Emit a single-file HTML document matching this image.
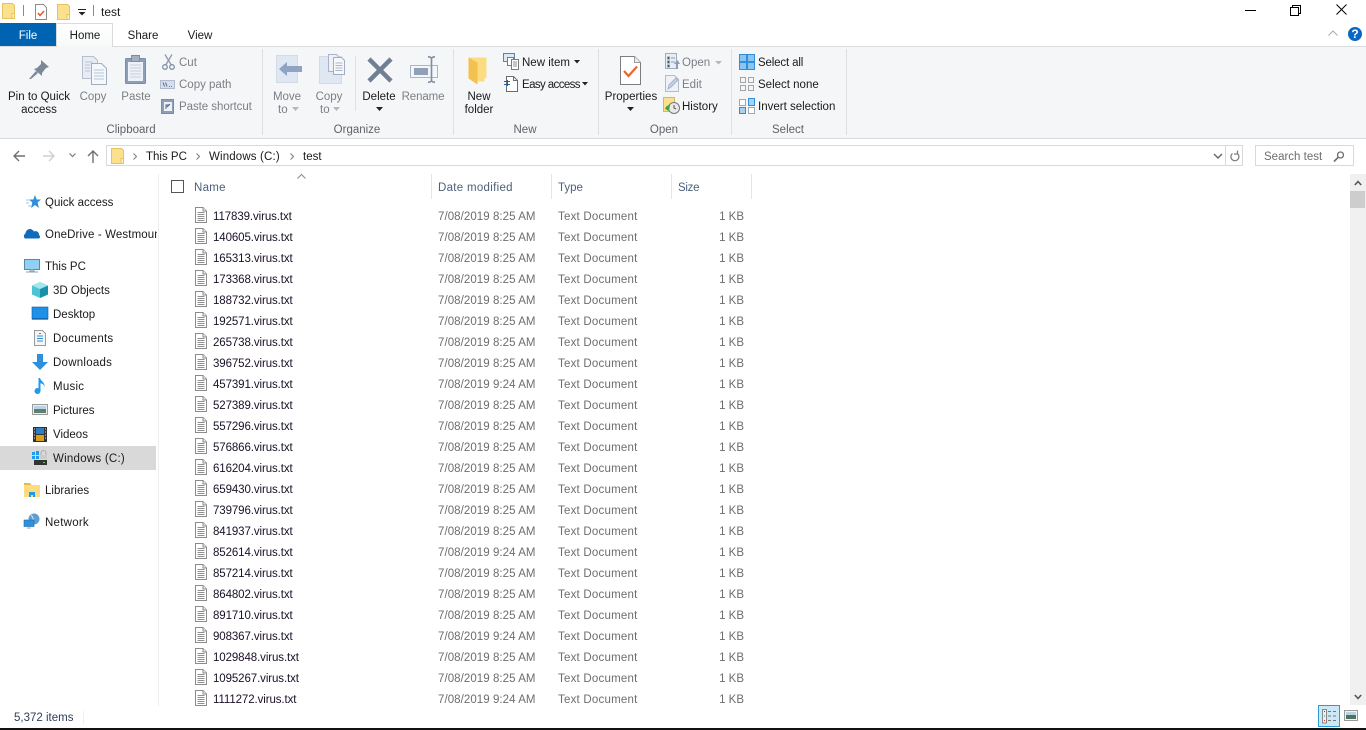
<!DOCTYPE html>
<html><head><meta charset="utf-8"><title>test</title>
<style>
html,body{margin:0;padding:0;background:#fff;width:1366px;height:730px;overflow:hidden}
body{position:relative;font-family:"Liberation Sans",sans-serif;font-size:11.5px;color:#1a1a1a}
.t{position:absolute;line-height:16px;white-space:nowrap;margin-top:1px}
.c{transform:translateX(-50%);text-align:center}
.d{color:#7b7f85}
.g{color:#5f6266}
.nv{letter-spacing:.25px}
.b{position:absolute}
svg{position:absolute;overflow:visible}
.r{position:absolute;left:0;height:21px;width:760px}
.r span{position:absolute;top:4px;line-height:16px;white-space:nowrap}
.r .n{left:213px;color:#1a1026;letter-spacing:-.1px}
.r .m{left:438px;color:#6d6d6d;letter-spacing:.06px}
.r .y{left:558px;color:#6d6d6d;letter-spacing:.22px}
.r .s{right:16px;color:#6d6d6d}
.r svg{left:195px;top:2px}
#list{position:absolute;left:0;top:205px;width:760px;height:501px;overflow:hidden}
</style></head><body>
<svg width="0" height="0" style="position:absolute"><defs>
<symbol id="doc" viewBox="0 0 12 16"><path d="M.5.5h7.500l3.500 3.500v11.500H.5z" fill="#fff" stroke="#8b8b8b"/><path d="M8 .5v3.500h3.500" fill="#eee" stroke="#8b8b8b"/><path d="M2.500 5.500h7M2.500 7.500h7M2.500 9.500h7M2.500 11.500h7M2.500 13.500h7" stroke="#8f8f8f"/></symbol>
<symbol id="fold" viewBox="0 0 13 16"><path d="M.5.5h10l2 2v13H.5z" fill="#fbe08e" stroke="#e8c35c"/><path d="M10 10.500h2.500v5H10z" fill="#fff3c4" stroke="#e8c35c"/></symbol>
</defs></svg>

<!-- title bar -->
<svg style="left:2px;top:3px" width="13" height="16"><use href="#fold" width="13" height="16"/></svg>
<div class="b" style="left:23px;top:5px;width:1px;height:11px;background:#8a8a8a"></div>
<svg style="left:35px;top:4px" width="12" height="16"><path d="M.5.500h8l3 3v12H.5z" fill="#fff" stroke="#8c8c8c"/><path d="M3 9l2 2.500 4-4.500" fill="none" stroke="#e8572a" stroke-width="1.500"/></svg>
<svg style="left:57px;top:4px" width="13" height="16"><use href="#fold" width="13" height="16"/></svg>
<svg style="left:77px;top:9px" width="10" height="8"><path d="M1 .5h8" stroke="#222"/><path d="M1.500 3h7l-3.500 3.500z" fill="#222"/></svg>
<div class="b" style="left:93px;top:5px;width:1px;height:11px;background:#8a8a8a"></div>
<div class="t" style="left:101px;top:3px;font-size:12px">test</div>
<svg style="left:1245px;top:10px" width="11" height="1"><path d="M0 .5h11" stroke="#000"/></svg>
<svg style="left:1290px;top:5px" width="11" height="11"><path d="M.5 2.500h8v8h-8zM2.500 2.500v-2h8v8h-2" fill="none" stroke="#000"/></svg>
<svg style="left:1336px;top:4px" width="11" height="11"><path d="M.5.5l10 10M10.500.5l-10 10" stroke="#000"/></svg>

<!-- tabs -->
<div class="b" style="left:0;top:23px;width:56px;height:23px;background:#0063b1"></div>
<div class="t c" style="left:28px;top:27px;color:#fff">File</div>
<div class="b" style="left:56px;top:23px;width:57px;height:24px;border:1px solid #dadbdc;border-bottom:none;box-sizing:border-box;background:linear-gradient(#fff,#f8f9fa)"></div>
<div class="t c" style="left:85px;top:27px">Home</div>
<div class="t c" style="left:143px;top:27px">Share</div>
<div class="t c" style="left:200px;top:27px">View</div>
<svg style="left:1328px;top:30px" width="10" height="6"><path d="M.5 5.500l4.500-4.500 4.500 4.500" fill="none" stroke="#a8a8a8"/></svg>
<div class="b" style="left:1348px;top:27px;width:14px;height:14px;border-radius:50%;background:#0a68c4"></div>
<div class="t c" style="left:1355px;top:25px;color:#fff;font-weight:bold;font-size:12px">?</div>

<!-- ribbon -->
<div class="b" style="left:0;top:46px;width:1366px;height:1px;background:#dadbdc"></div>
<div class="b" style="left:0;top:47px;width:1366px;height:91px;background:#f5f6f7"></div>
<div class="b" style="left:57px;top:46px;width:55px;height:2px;background:#f5f6f7"></div>
<div class="b" style="left:0;top:138px;width:1366px;height:1px;background:#dadbdc"></div>
<div class="b" style="left:262px;top:49px;width:1px;height:86px;background:#dfe0e1"></div>
<div class="b" style="left:453px;top:49px;width:1px;height:86px;background:#dfe0e1"></div>
<div class="b" style="left:598px;top:49px;width:1px;height:86px;background:#dfe0e1"></div>
<div class="b" style="left:731px;top:49px;width:1px;height:86px;background:#dfe0e1"></div>
<div class="b" style="left:846px;top:49px;width:1px;height:86px;background:#dfe0e1"></div>
<div class="b" style="left:355px;top:56px;width:1px;height:55px;background:#dfe0e1"></div>

<!-- pin -->
<svg style="left:28px;top:59px" width="22" height="22"><path d="M13 1l8 7-3 1-4 5 0 3-8-7 3-1 4-4z" fill="#7c8797"/><path d="M8 12l-7 8 2 0 7-6z" fill="#7c8797"/></svg>
<div class="t c" style="left:39px;top:88px">Pin to Quick</div>
<div class="t c" style="left:39px;top:101px">access</div>
<!-- copy -->
<svg style="left:82px;top:56px" width="25" height="29"><path d="M.5.500h11l4 4v18H.5z" fill="#e8edf4" stroke="#b4bfcf"/><path d="M9.500 7.500h10l5 5v16h-15z" fill="#f4f7fb" stroke="#a0aec0"/><path d="M3 6h8M3 9h5M3 12h5M3 15h5M12 14h10M12 17h10M12 20h10M12 23h10" stroke="#b8c4d4"/></svg>
<div class="t c d" style="left:93px;top:88px">Copy</div>
<!-- paste -->
<svg style="left:125px;top:55px" width="22" height="30"><rect x=".5" y="3.500" width="20" height="25" rx="1" fill="#8d9fb8" stroke="#7b8ca5"/><rect x="3" y="7" width="15" height="19" fill="#eef2f8"/><rect x="6.500" y=".5" width="8" height="6" fill="#a3b0c2" stroke="#7b8ca5"/><path d="M5 10h11M5 13h11M5 16h11M5 19h11M5 22h11" stroke="#c3cfdf"/></svg>
<div class="t c d" style="left:136px;top:88px">Paste</div>
<!-- small clipboard -->
<svg style="left:162px;top:54px" width="13" height="16"><path d="M3 .5l6 10M10 .5l-6 10" stroke="#8e9aac" stroke-width="1.300"/><circle cx="3" cy="13" r="2.300" fill="none" stroke="#7f90a8" stroke-width="1.300"/><circle cx="10" cy="13" r="2.300" fill="none" stroke="#7f90a8" stroke-width="1.300"/></svg>
<div class="t d" style="left:179px;top:54px">Cut</div>
<svg style="left:160px;top:80px" width="15" height="9"><rect x=".5" y=".5" width="14" height="8" fill="#d5deea" stroke="#b0bccd"/><path d="M3 2.500l1.500 4M5.500 2.500l1.500 4M9 6.500h.8M11 6.500h.8" stroke="#5d6d85"/></svg>
<div class="t d" style="left:179px;top:76px">Copy path</div>
<svg style="left:161px;top:98px" width="13" height="16"><rect x=".5" y="1.500" width="12" height="14" fill="#8d9fb8" stroke="#7b8ca5"/><rect x="3" y="4" width="8" height="9" fill="#eef2f8"/><path d="M5 11V7h3M6 9l3-3" stroke="#4a5c78" fill="none"/></svg>
<div class="t d" style="left:179px;top:98px;letter-spacing:-.05px">Paste shortcut</div>
<div class="t c g" style="left:131px;top:121px">Clipboard</div>

<!-- move -->
<svg style="left:276px;top:55px" width="28" height="30"><path d="M.5.500h21v27H.5z" fill="#dee7f2" stroke="#d2dbe7"/><path d="M11 21l-8-7 8-7v4h15v6H11z" fill="#8ea4c2"/></svg>
<div class="t c d" style="left:287px;top:88px">Move</div>
<div class="t d" style="left:278px;top:101px">to</div>
<svg style="left:292px;top:107px" width="7" height="4"><path d="M0 0h7l-3.500 4z" fill="#b4b8bd"/></svg>
<!-- copy to -->
<svg style="left:319px;top:54px" width="27" height="31"><path d="M.5 2.500h22v27H.5z" fill="#dee7f2" stroke="#d2dbe7"/><path d="M9.500.5h8l3 3v14h-11z" fill="#eef2f8" stroke="#a8b5c7"/><path d="M14.500 3.500h8l3 3v14h-11z" fill="#f6f8fb" stroke="#a0aec0"/><path d="M16.500 9h7M16.500 11.500h7M16.500 14h7M16.500 16.500h7" stroke="#a9b6c8"/></svg>
<div class="t c d" style="left:329px;top:88px">Copy</div>
<div class="t d" style="left:320px;top:101px">to</div>
<svg style="left:333px;top:107px" width="7" height="4"><path d="M0 0h7l-3.500 4z" fill="#b4b8bd"/></svg>
<!-- delete -->
<svg style="left:367px;top:57px" width="26" height="26"><path d="M2 2l22 22M24 2L2 24" stroke="#6f7f96" stroke-width="4.500"/></svg>
<div class="t c" style="left:379px;top:88px">Delete</div>
<svg style="left:376px;top:107px" width="7" height="4"><path d="M0 0h7l-3.500 4z" fill="#222"/></svg>
<!-- rename -->
<svg style="left:410px;top:56px" width="29" height="28"><rect x=".5" y="9.500" width="27" height="12" fill="#f3f6fa" stroke="#a9b6c7"/><rect x="4" y="12" width="14" height="7" fill="#8fa0b8"/><path d="M18 .8c2 0 3 .5 3.500 1.500.5-1 1.500-1.500 3.500-1.500M18 26.200c2 0 3-.5 3.500-1.500.5 1 1.500 1.500 3.500 1.500M21.500 2v23" fill="none" stroke="#7e8ea6" stroke-width="1.600"/></svg>
<div class="t c d" style="left:423px;top:88px;letter-spacing:-.1px">Rename</div>
<div class="t c g" style="left:357px;top:121px">Organize</div>

<!-- new -->
<svg style="left:468px;top:57px" width="20" height="28"><path d="M.5.500h18v20l-2 1v3H9z" fill="#fcdc80"/><path d="M.5 .5l9 5v22l-9-6z" fill="#f2c14f"/></svg>
<div class="t c" style="left:479px;top:88px">New</div>
<div class="t c" style="left:479px;top:101px">folder</div>
<svg style="left:503px;top:53px" width="16" height="17"><rect x=".5" y=".5" width="11" height="8" fill="#dbe8f5" stroke="#6d7f96"/><rect x="4.500" y="4.500" width="6" height="8" fill="#fff" stroke="#7b7b7b"/><rect x="8.500" y="6.500" width="7" height="10" fill="#fff" stroke="#7b7b7b"/><path d="M10 9h4M10 11h4M10 13h4" stroke="#8b8b8b"/></svg>
<div class="t" style="left:522px;top:54px">New item</div>
<svg style="left:574px;top:60px" width="6" height="4"><path d="M0 0h6L3 3.500z" fill="#222"/></svg>
<svg style="left:503px;top:75px" width="15" height="17"><path d="M3.500 1.500h7l4 4v11h-11z" fill="#fff" stroke="#6c6c6c"/><path d="M10.500 1.500v4h4" fill="none" stroke="#6c6c6c"/><path d="M1 6.500h6M1 9.500h6M4.500 5v6" stroke="#1f5fa8"/></svg>
<div class="t" style="left:522px;top:76px;letter-spacing:-.6px">Easy access</div>
<svg style="left:582px;top:82px" width="6" height="4"><path d="M0 0h6L3 3.500z" fill="#222"/></svg>
<div class="t c g" style="left:525px;top:121px">New</div>

<!-- open -->
<svg style="left:620px;top:56px" width="21" height="29"><path d="M.5.500h14l6 6v22H.5z" fill="#fff" stroke="#7d7d7d"/><path d="M14.500.5v6h6" fill="#eee" stroke="#9b9b9b"/><path d="M4 15l4.500 5L17 10.500" fill="none" stroke="#e8662a" stroke-width="2.200"/></svg>
<div class="t c" style="left:631px;top:88px">Properties</div>
<svg style="left:627px;top:107px" width="7" height="4"><path d="M0 0h7l-3.500 4z" fill="#222"/></svg>
<svg style="left:665px;top:53px" width="15" height="17"><rect x=".5" y=".5" width="11" height="15" fill="#e7edf5" stroke="#9fadc0"/><path d="M2.500 4h2v2h-2zM2.500 8h2v2h-2zM2.500 12h2v2h-2zM6 5h4M6 9h4" stroke="#8b9bb1"/><path d="M11 16v-5H9l3.500-4 2.500 4h-2v5z" fill="#8b9bb1"/></svg>
<div class="t d" style="left:682px;top:54px">Open</div>
<svg style="left:715px;top:61px" width="7" height="4"><path d="M0 0h7l-3.500 3.500z" fill="#b4b8bd"/></svg>
<svg style="left:665px;top:75px" width="15" height="17"><path d="M.5.500h9l4 4v12H.5z" fill="#eef2f8" stroke="#b0bccd"/><path d="M3 14l1-4 7-7 2 2-7 7z" fill="#c3d1e4" stroke="#a6b5c9"/></svg>
<div class="t d" style="left:682px;top:76px">Edit</div>
<svg style="left:663px;top:97px" width="17" height="17"><rect x=".5" y=".5" width="11" height="14" fill="#fbe08e" stroke="#d9b659"/><circle cx="11" cy="11" r="5.500" fill="#e9e9e9" stroke="#777"/><path d="M11 8v3l2 1" fill="none" stroke="#555"/><path d="M2 12a5 5 0 0 1 5-4l-1 6z" fill="#43a43d"/></svg>
<div class="t" style="left:682px;top:98px">History</div>
<div class="t c g" style="left:664px;top:121px">Open</div>

<!-- select -->
<svg style="left:739px;top:54px" width="16" height="16"><rect width="16" height="16" fill="#2f8fdc"/><rect x="1" y="1" width="6" height="6" fill="#8cc4f0"/><rect x="9" y="1" width="6" height="6" fill="#8cc4f0"/><rect x="1" y="9" width="6" height="6" fill="#8cc4f0"/><rect x="9" y="9" width="6" height="6" fill="#8cc4f0"/></svg>
<div class="t" style="left:758px;top:54px;letter-spacing:-.15px">Select all</div>
<svg style="left:740px;top:77px" width="14" height="14"><path d="M.5.500h5v5h-5zM8.500.5h5v5h-5zM.5 8.500h5v5h-5zM8.500 8.500h5v5h-5z" fill="none" stroke="#a5a5a5"/></svg>
<div class="t" style="left:758px;top:76px">Select none</div>
<svg style="left:739px;top:98px" width="16" height="16"><path d="M.5 1.500h6v6h-6zM9.500 9.500h6v6h-6z" fill="#fff" stroke="#a5a5a5"/><path d="M9.500.5h6v7h-6zM.5 9.500h6v6h-6z" fill="#a8d2f2" stroke="#2f8fdc"/></svg>
<div class="t" style="left:758px;top:98px">Invert selection</div>
<div class="t c g" style="left:788px;top:121px">Select</div>

<!-- address bar -->
<svg style="left:13px;top:150px" width="12" height="12"><path d="M.8 6H12M6 1L1 6l5 5" fill="none" stroke="#6f6f6f" stroke-width="1.400"/></svg>
<svg style="left:43px;top:150px" width="12" height="12"><path d="M11.200 6H0M6 1l5 5-5 5" fill="none" stroke="#cfcfcf" stroke-width="1.400"/></svg>
<svg style="left:69px;top:153px" width="7" height="5"><path d="M.5.500l3 3 3-3" fill="none" stroke="#7a7a7a" stroke-width="1.200"/></svg>
<svg style="left:87px;top:150px" width="12" height="13"><path d="M6 13V1M1 6l5-5 5 5" fill="none" stroke="#6f6f6f" stroke-width="1.400"/></svg>
<div class="b" style="left:106px;top:145px;width:1137px;height:21px;border:1px solid #d9d9d9;box-sizing:border-box"></div>
<svg style="left:111px;top:148px" width="13" height="16"><use href="#fold" width="13" height="16"/></svg>
<svg style="left:133px;top:153px" width="4" height="7"><path d="M.5.500l3 3-3 3" fill="none" stroke="#7a7a7a"/></svg>
<div class="t" style="left:146px;top:148px">This PC</div>
<svg style="left:196px;top:153px" width="4" height="7"><path d="M.5.500l3 3-3 3" fill="none" stroke="#7a7a7a"/></svg>
<div class="t" style="left:209px;top:148px;letter-spacing:.15px">Windows (C:)</div>
<svg style="left:290px;top:153px" width="4" height="7"><path d="M.5.500l3 3-3 3" fill="none" stroke="#7a7a7a"/></svg>
<div class="t" style="left:303px;top:148px">test</div>
<svg style="left:1213px;top:153px" width="10" height="6"><path d="M1 1l4 4 4-4" fill="none" stroke="#6a6a6a" stroke-width="1.500"/></svg>
<div class="b" style="left:1225px;top:146px;width:1px;height:19px;background:#d9d9d9"></div>
<svg style="left:1230px;top:150px" width="10" height="12"><path d="M2.500 3.500a4 4 0 1 0 5 .2M7.500 .5v3.500h-3.500" fill="none" stroke="#7f7f7f" stroke-width="1.300"/></svg>
<div class="b" style="left:1255px;top:145px;width:99px;height:21px;border:1px solid #d9d9d9;box-sizing:border-box"></div>
<div class="t" style="left:1264px;top:148px;color:#6d6d6d">Search test</div>
<svg style="left:1333px;top:151px" width="12" height="11"><circle cx="7.500" cy="4" r="3" fill="none" stroke="#6f6f6f" stroke-width="1.300"/><path d="M5 6.500L1 10.500" stroke="#6f6f6f" stroke-width="1.600"/></svg>

<!-- nav pane -->
<div class="b" style="left:158px;top:174px;width:1px;height:532px;background:#eeeeee"></div>
<svg style="left:26px;top:195px" width="15" height="14"><path d="M9 0l1.700 4.500H15l-3.400 3 1.300 5.500L9 10l-4 3 1.300-5.500L3 4.500h4.300z" fill="#2f8fdc"/><path d="M0 5h4M0 8h3M2 11h3" stroke="#9ec9ee"/></svg>
<div class="t" style="left:45px;top:194px">Quick access</div>
<svg style="left:24px;top:228px" width="16" height="11"><path d="M1 10.500a3 3 0 0 1 .5-5 4.500 4.500 0 0 1 8.500-2 3.500 3.500 0 0 1 5 3.500 2 2 0 0 1 0 3.500z" fill="#0f6cbd"/></svg>
<div class="t" style="left:45px;top:226px;width:112px;overflow:hidden;letter-spacing:.12px">OneDrive - Westmount</div>
<svg style="left:24px;top:259px" width="16" height="14"><rect x=".5" y=".5" width="15" height="10" fill="#8fd0f5" stroke="#5d87a8"/><path d="M6 11h4v1.500H6zM2 13h12" stroke="#8ea2b3" fill="none"/></svg>
<div class="t" style="left:45px;top:258px">This PC</div>
<svg style="left:32px;top:282px" width="16" height="16"><path d="M8 0l8 3.500v9L8 16 0 12.500v-9z" fill="#4cc4d4"/><path d="M8 7l8-3.500v9L8 16z" fill="#1b8fa8"/><path d="M8 7L0 3.500 8 0l8 3.500z" fill="#a2e6ec"/></svg>
<div class="t" style="left:53px;top:282px">3D Objects</div>
<svg style="left:32px;top:307px" width="16" height="13"><rect width="16" height="12" fill="#1e90e6" stroke="#0e5fa8" stroke-width=".6"/><path d="M0 12h16" stroke="#0a4f8f" stroke-width="1.200"/></svg>
<div class="t" style="left:53px;top:306px">Desktop</div>
<svg style="left:34px;top:330px" width="12" height="16"><path d="M.5.500h8l3 3v12H.5z" fill="#f4f4f4" stroke="#9a9a9a"/><path d="M3 6h6M3 8.500h6M3 11h6M5 3.500h2" stroke="#2f8fdc"/></svg>
<div class="t nv" style="left:53px;top:330px">Documents</div>
<svg style="left:32px;top:354px" width="16" height="16"><path d="M5 0h6v8h5l-8 8-8-8h5z" fill="#2f8fdc"/></svg>
<div class="t nv" style="left:53px;top:354px">Downloads</div>
<svg style="left:34px;top:378px" width="12" height="16"><path d="M4.500 0h1.500c.5 3 5 4 4.500 9-.5-2-2-3.500-4-3.700V13a3 3 0 1 1-2-2.800z" fill="#1f9bed"/></svg>
<div class="t nv" style="left:53px;top:378px">Music</div>
<svg style="left:32px;top:404px" width="16" height="11"><rect x=".5" y=".5" width="15" height="10" fill="#e8f0f5" stroke="#9a9a9a"/><path d="M2 2h12v3H2z" fill="#b7d3e6"/><path d="M2 5h12v4H2z" fill="#5b8070"/></svg>
<div class="t" style="left:53px;top:402px">Pictures</div>
<svg style="left:33px;top:427px" width="14" height="15"><rect width="14" height="15" fill="#333"/><rect x="3" y="1" width="8" height="6" fill="#2a7fc4"/><rect x="3" y="8" width="8" height="6" fill="#d8a020"/><path d="M1 2h1M1 5h1M1 8h1M1 11h1M12 2h1M12 5h1M12 8h1M12 11h1" stroke="#ddd"/></svg>
<div class="t" style="left:53px;top:426px">Videos</div>
<div class="b" style="left:0;top:446px;width:156px;height:24px;background:#d9d9d9"></div>
<svg style="left:32px;top:450px" width="16" height="16"><path d="M0 2h3v3H0zM4 1h3v4H4zM0 6h3v3H0zM4 6h3v3H4z" fill="#1f9bed"/><path d="M9 5V3a2.500 2.500 0 0 1 5 0v2" fill="none" stroke="#aaa"/><rect x="8" y="5" width="7" height="4" fill="#ccc"/><rect x="2" y="10" width="13" height="5" fill="#333"/><rect x="11" y="12" width="2" height="1" fill="#6c6"/></svg>
<div class="t nv" style="left:53px;top:450px">Windows (C:)</div>
<svg style="left:24px;top:483px" width="16" height="14"><path d="M0 0h6l2 2h8v12H0z" fill="#fcdc80"/><path d="M0 0h6l1 2H0z" fill="#e8b84c"/><path d="M5 14V9h6v5h-2v-2H7v2z" fill="#1f9bed"/></svg>
<div class="t" style="left:45px;top:482px">Libraries</div>
<svg style="left:24px;top:514px" width="16" height="15"><circle cx="10" cy="5" r="5.500" fill="#5d9fd0"/><path d="M7 1c2 2 3 5 2 9" stroke="#cfe3f2" fill="none"/><rect x="0" y="6" width="10" height="6.500" fill="#2f8fdc" stroke="#1a6aa8" stroke-width=".6"/><path d="M3 14h4" stroke="#8ea2b3"/></svg>
<div class="t nv" style="left:45px;top:514px">Network</div>

<!-- header -->
<div class="b" style="left:171px;top:180px;width:13px;height:13px;border:1px solid #555;box-sizing:border-box"></div>
<div class="t" style="left:194px;top:179px;color:#4c607a;letter-spacing:.3px">Name</div>
<svg style="left:297px;top:174px" width="9" height="5"><path d="M.5 4.500l4-4 4 4" fill="none" stroke="#8a8a8a"/></svg>
<div class="b" style="left:431px;top:174px;width:1px;height:25px;background:#e5e5e5"></div>
<div class="t" style="left:438px;top:179px;color:#4c607a;letter-spacing:.3px">Date modified</div>
<div class="b" style="left:551px;top:174px;width:1px;height:25px;background:#e5e5e5"></div>
<div class="t" style="left:558px;top:179px;color:#4c607a">Type</div>
<div class="b" style="left:671px;top:174px;width:1px;height:25px;background:#e5e5e5"></div>
<div class="t" style="left:678px;top:179px;color:#4c607a;letter-spacing:-.3px">Size</div>
<div class="b" style="left:751px;top:174px;width:1px;height:25px;background:#e5e5e5"></div>

<!-- rows -->
<div id="list">
<div class="r" style="top:0"><svg width="12" height="16"><use href="#doc" width="12" height="16"/></svg><span class="n">117839.virus.txt</span><span class="m">7/08/2019 8:25 AM</span><span class="y">Text Document</span><span class="s">1 KB</span></div>
<div class="r" style="top:21px"><svg width="12" height="16"><use href="#doc" width="12" height="16"/></svg><span class="n">140605.virus.txt</span><span class="m">7/08/2019 8:25 AM</span><span class="y">Text Document</span><span class="s">1 KB</span></div>
<div class="r" style="top:42px"><svg width="12" height="16"><use href="#doc" width="12" height="16"/></svg><span class="n">165313.virus.txt</span><span class="m">7/08/2019 8:25 AM</span><span class="y">Text Document</span><span class="s">1 KB</span></div>
<div class="r" style="top:63px"><svg width="12" height="16"><use href="#doc" width="12" height="16"/></svg><span class="n">173368.virus.txt</span><span class="m">7/08/2019 8:25 AM</span><span class="y">Text Document</span><span class="s">1 KB</span></div>
<div class="r" style="top:84px"><svg width="12" height="16"><use href="#doc" width="12" height="16"/></svg><span class="n">188732.virus.txt</span><span class="m">7/08/2019 8:25 AM</span><span class="y">Text Document</span><span class="s">1 KB</span></div>
<div class="r" style="top:105px"><svg width="12" height="16"><use href="#doc" width="12" height="16"/></svg><span class="n">192571.virus.txt</span><span class="m">7/08/2019 8:25 AM</span><span class="y">Text Document</span><span class="s">1 KB</span></div>
<div class="r" style="top:126px"><svg width="12" height="16"><use href="#doc" width="12" height="16"/></svg><span class="n">265738.virus.txt</span><span class="m">7/08/2019 8:25 AM</span><span class="y">Text Document</span><span class="s">1 KB</span></div>
<div class="r" style="top:147px"><svg width="12" height="16"><use href="#doc" width="12" height="16"/></svg><span class="n">396752.virus.txt</span><span class="m">7/08/2019 8:25 AM</span><span class="y">Text Document</span><span class="s">1 KB</span></div>
<div class="r" style="top:168px"><svg width="12" height="16"><use href="#doc" width="12" height="16"/></svg><span class="n">457391.virus.txt</span><span class="m">7/08/2019 9:24 AM</span><span class="y">Text Document</span><span class="s">1 KB</span></div>
<div class="r" style="top:189px"><svg width="12" height="16"><use href="#doc" width="12" height="16"/></svg><span class="n">527389.virus.txt</span><span class="m">7/08/2019 8:25 AM</span><span class="y">Text Document</span><span class="s">1 KB</span></div>
<div class="r" style="top:210px"><svg width="12" height="16"><use href="#doc" width="12" height="16"/></svg><span class="n">557296.virus.txt</span><span class="m">7/08/2019 8:25 AM</span><span class="y">Text Document</span><span class="s">1 KB</span></div>
<div class="r" style="top:231px"><svg width="12" height="16"><use href="#doc" width="12" height="16"/></svg><span class="n">576866.virus.txt</span><span class="m">7/08/2019 8:25 AM</span><span class="y">Text Document</span><span class="s">1 KB</span></div>
<div class="r" style="top:252px"><svg width="12" height="16"><use href="#doc" width="12" height="16"/></svg><span class="n">616204.virus.txt</span><span class="m">7/08/2019 8:25 AM</span><span class="y">Text Document</span><span class="s">1 KB</span></div>
<div class="r" style="top:273px"><svg width="12" height="16"><use href="#doc" width="12" height="16"/></svg><span class="n">659430.virus.txt</span><span class="m">7/08/2019 8:25 AM</span><span class="y">Text Document</span><span class="s">1 KB</span></div>
<div class="r" style="top:294px"><svg width="12" height="16"><use href="#doc" width="12" height="16"/></svg><span class="n">739796.virus.txt</span><span class="m">7/08/2019 8:25 AM</span><span class="y">Text Document</span><span class="s">1 KB</span></div>
<div class="r" style="top:315px"><svg width="12" height="16"><use href="#doc" width="12" height="16"/></svg><span class="n">841937.virus.txt</span><span class="m">7/08/2019 8:25 AM</span><span class="y">Text Document</span><span class="s">1 KB</span></div>
<div class="r" style="top:336px"><svg width="12" height="16"><use href="#doc" width="12" height="16"/></svg><span class="n">852614.virus.txt</span><span class="m">7/08/2019 9:24 AM</span><span class="y">Text Document</span><span class="s">1 KB</span></div>
<div class="r" style="top:357px"><svg width="12" height="16"><use href="#doc" width="12" height="16"/></svg><span class="n">857214.virus.txt</span><span class="m">7/08/2019 8:25 AM</span><span class="y">Text Document</span><span class="s">1 KB</span></div>
<div class="r" style="top:378px"><svg width="12" height="16"><use href="#doc" width="12" height="16"/></svg><span class="n">864802.virus.txt</span><span class="m">7/08/2019 8:25 AM</span><span class="y">Text Document</span><span class="s">1 KB</span></div>
<div class="r" style="top:399px"><svg width="12" height="16"><use href="#doc" width="12" height="16"/></svg><span class="n">891710.virus.txt</span><span class="m">7/08/2019 8:25 AM</span><span class="y">Text Document</span><span class="s">1 KB</span></div>
<div class="r" style="top:420px"><svg width="12" height="16"><use href="#doc" width="12" height="16"/></svg><span class="n">908367.virus.txt</span><span class="m">7/08/2019 9:24 AM</span><span class="y">Text Document</span><span class="s">1 KB</span></div>
<div class="r" style="top:441px"><svg width="12" height="16"><use href="#doc" width="12" height="16"/></svg><span class="n">1029848.virus.txt</span><span class="m">7/08/2019 8:25 AM</span><span class="y">Text Document</span><span class="s">1 KB</span></div>
<div class="r" style="top:462px"><svg width="12" height="16"><use href="#doc" width="12" height="16"/></svg><span class="n">1095267.virus.txt</span><span class="m">7/08/2019 8:25 AM</span><span class="y">Text Document</span><span class="s">1 KB</span></div>
<div class="r" style="top:483px"><svg width="12" height="16"><use href="#doc" width="12" height="16"/></svg><span class="n">1111272.virus.txt</span><span class="m">7/08/2019 9:24 AM</span><span class="y">Text Document</span><span class="s">1 KB</span></div>
</div>

<!-- scrollbar -->
<div class="b" style="left:1350px;top:174px;width:16px;height:531px;background:#f0f0f0"></div>
<svg style="left:1354px;top:180px" width="8" height="6"><path d="M.8 5L4 1.500 7.200 5" fill="none" stroke="#555" stroke-width="1.600"/></svg>
<div class="b" style="left:1350px;top:191px;width:15px;height:17px;background:#cdcdcd"></div>
<svg style="left:1354px;top:694px" width="8" height="6"><path d="M.8 1L4 4.500 7.200 1" fill="none" stroke="#555" stroke-width="1.600"/></svg>

<!-- status -->
<div class="t" style="left:14px;top:709px;color:#2c3e5a">5,372 items</div>
<div class="b" style="left:83px;top:711px;width:1px;height:13px;background:#efefef"></div>
<div class="b" style="left:1318px;top:705px;width:22px;height:22px;background:#cce8f7;border:1px solid #2a9bd4;box-sizing:border-box"></div>
<svg style="left:1322px;top:709px" width="16" height="15"><rect x=".5" y=".5" width="4" height="13.500" fill="#eee" stroke="#888"/><path d="M2 2.500h1" stroke="#555"/><path d="M2 7h1" stroke="#2a7fc4"/><path d="M2 11.500h1" stroke="#d33"/><path d="M6 2.500h3M11 2.500h3M6 7h3M11 7h3M6 11.500h3M11 11.500h3" stroke="#777"/></svg>
<svg style="left:1344px;top:710px" width="14" height="11"><rect x=".5" y=".5" width="13" height="10" fill="#f2f5f7" stroke="#9a9a9a"/><rect x="2" y="2" width="10" height="3" fill="#b7d3e6"/><rect x="2" y="5" width="10" height="4" fill="#4f7265"/></svg>
<div class="b" style="left:0;top:728px;width:1366px;height:2px;background:#111"></div>
</body></html>
